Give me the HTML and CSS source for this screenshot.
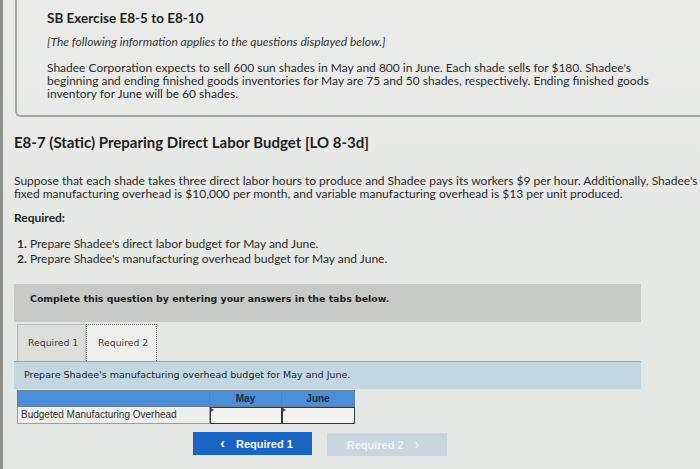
FILE: index.html
```html
<!DOCTYPE html>
<html>
<head>
<meta charset="utf-8">
<link rel="stylesheet" href="styles.css">
</head>
<body>
<div class="page">
  <div class="intro">
    <div class="intro-title">SB Exercise E8-5 to E8-10</div>
    <div class="intro-note">[The following information applies to the questions displayed below.]</div>
    <p class="intro-text">Shadee Corporation expects to sell 600 sun shades in May and 800 in June. Each shade sells for $180. Shadee's beginning and ending finished goods inventories for May are 75 and 50 shades, respectively. Ending finished goods inventory for June will be 60 shades.</p>
  </div>

  <h1 class="q-title">E8-7 (Static) Preparing Direct Labor Budget [LO 8-3d]</h1>
  <p class="q-text">Suppose that each shade takes three direct labor hours to produce and Shadee pays its workers $9 per hour. Additionally, Shadee's fixed manufacturing overhead is $10,000 per month, and variable manufacturing overhead is $13 per unit produced.</p>
  <div class="req-label">Required:</div>
  <ol class="req-list">
    <li><b>1.</b> Prepare Shadee's direct labor budget for May and June.</li>
    <li><b>2.</b> Prepare Shadee's manufacturing overhead budget for May and June.</li>
  </ol>

  <div class="work">
    <div class="instr">Complete this question by entering your answers in the tabs below.</div>
    <div class="tabs">
      <div class="tab">Required 1</div>
      <div class="tab active">Required 2</div>
    </div>
    <div class="prompt">Prepare Shadee's manufacturing overhead budget for May and June.</div>
    <div class="table">
      <div class="th blank"></div>
      <div class="th">May</div>
      <div class="th">June</div>
      <div class="td label">Budgeted Manufacturing Overhead</div>
      <div class="td input"></div>
      <div class="td input"></div>
    </div>
    <div class="nav">
      <div class="btn prev"><span class="chev">&lsaquo;</span> Required 1</div>
      <div class="btn next">Required 2 <span class="chev">&rsaquo;</span></div>
    </div>
  </div>
</div>
</body>
</html>
```
FILE: styles.css
```css
html, body {
  margin: 0;
  padding: 0;
}
body {
  background: #e5e7e4;
  width: 700px;
  height: 469px;
  overflow: hidden;
  font-family: Lato, "Open Sans", sans-serif;
  color: #232425;
}
.page {
  border-left: 3px solid #8e908e;
  padding-left: 11px;
  height: 469px;
  box-sizing: border-box;
  background: linear-gradient(180deg, #ebecea 0%, #e6e8e5 50%, #e3e6e3 100%);
}
.intro {
  margin-left: 1px;
  border-left: 2px solid #a3a5a3;
  border-bottom: 2px solid #a3a5a3;
  border-bottom-left-radius: 6px;
  height: 117px;
  box-sizing: border-box;
  padding: 10px 0 0 30px;
  margin-right: -20px;
}
.intro-title {
  font-size: 13.5px;
  font-weight: 700;
  line-height: 16px;
  color: #1e1f20;
}
.intro-note {
  font-size: 12px;
  font-style: italic;
  line-height: 14px;
  margin-top: 9px;
  color: #333;
}
.intro-text {
  font-size: 12px;
  line-height: 13px;
  margin: 12px 0 0;
  width: 610px;
  color: #2a2b2c;
}
.q-title {
  font-size: 15px;
  font-weight: 700;
  margin: 16px 0 0;
  line-height: 18px;
  color: #1e1f20;
}
.q-text {
  font-size: 12px;
  line-height: 13px;
  margin: 23px 0 0;
  width: 690px;
  color: #2a2b2c;
}
.req-label {
  font-size: 12px;
  font-weight: 700;
  margin-top: 11px;
  line-height: 14px;
}
.req-list {
  list-style: none;
  margin: 11px 0 0;
  padding: 0 0 0 3px;
  font-size: 12px;
  line-height: 15px;
  color: #2a2b2c;
}
.work {
  margin-top: 18px;
  width: 627px;
  font-family: "DejaVu Sans", Verdana, sans-serif;
}
.instr {
  background: #c8cac7;
  height: 38px;
  box-sizing: border-box;
  padding: 8px 0 0 16px;
  font-size: 9.4px;
  font-weight: 700;
  line-height: 14px;
  color: #1d1e1f;
}
.tabs {
  display: flex;
  margin-top: 2px;
  padding-left: 3px;
  height: 38px;
  box-sizing: border-box;
  border-bottom: 1px solid #9aa3a8;
}
.tab {
  width: 69px;
  box-sizing: border-box;
  background: #dcdedb;
  border: 1px solid #b9bbb8;
  border-bottom: none;
  font-size: 9.3px;
  color: #3a3b3c;
  padding-left: 10px;
  line-height: 36px;
}
.tab.active {
  width: 71px;
  background: #eeefed;
  border: 1px dotted #6e7070;
  border-bottom: none;
  padding-left: 11px;
}
.prompt {
  background: #c3d7e3;
  height: 27px;
  box-sizing: border-box;
  padding: 6px 0 0 10px;
  font-size: 9.5px;
  line-height: 14px;
  color: #232425;
}
.table {
  display: grid;
  grid-template-columns: 193px 72px 73px;
  margin: 1px 0 0 3px;
  width: 338px;
  font-family: "Liberation Sans", Arial, sans-serif;
}
.th {
  background: #4b8fdb;
  height: 17px;
  border: 1px solid #6d7e8f;
  border-left: none;
  box-sizing: border-box;
  font-size: 10px;
  font-weight: 700;
  text-align: center;
  color: #1b2a3a;
  line-height: 15px;
}
.th.blank {
  border-left: 1px solid #6d7e8f;
}
.td {
  height: 17px;
  box-sizing: border-box;
  background: #eceeeb;
}
.td.label {
  border: 1px solid #9c9e9c;
  border-top: none;
  font-size: 10px;
  line-height: 15px;
  padding-left: 3px;
  color: #333;
}
.td.input {
  background: #f2f3f1;
  border: 1.5px solid #2f3a46;
  border-top-width: 1px;
  position: relative;
}
.td.input::before {
  content: "";
  position: absolute;
  left: 0;
  top: 0;
  border-left: 3px solid #2b5c9a;
  border-top: 2px solid transparent;
  border-bottom: 2px solid transparent;
}
.nav {
  display: flex;
  margin: 8px 0 0 179px;
  gap: 15px;
}
.btn {
  width: 119px;
  height: 23px;
  box-sizing: border-box;
  font-family: "Liberation Sans", Arial, sans-serif;
  font-size: 11px;
  font-weight: 700;
  text-align: center;
  line-height: 23px;
}
.btn.prev {
  background: #1b65c2;
  color: #f4f7fb;
}
.btn.next {
  background: #c8d6e0;
  color: #eef2f5;
  margin-top: 1px;
  width: 120px;
}
.chev {
  font-size: 14px;
  margin: 0 8px;
  font-weight: 700;
}
```
